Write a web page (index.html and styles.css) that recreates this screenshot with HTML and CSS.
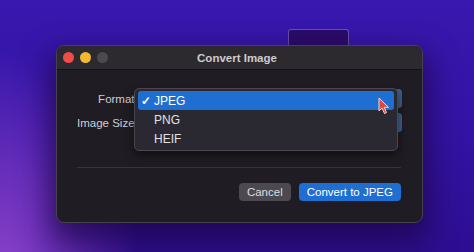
FILE: index.html
```html
<!DOCTYPE html>
<html>
<head>
<meta charset="utf-8">
	<title>Convert Image</title>

	<link rel="stylesheet" href="styles.css">
</head>
<body>

<div class="desktop">
	<div class="back-tab"></div>

	<div class="window">
		<div class="titlebar">
			<div class="lights">
				<span class="light red"></span>
				<span class="light yellow"></span>
				<span class="light grey"></span>
			</div>
			<div class="title">Convert Image</div>
		</div>

		<div class="content">
			<div class="form">
				<label class="label">Format</label>
				<div class="popup"><span class="popup-arrow"></span></div>
				<label class="label">Image Size</label>
				<div class="popup"><span class="popup-arrow"></span></div>
			</div>

			<div class="separator"></div>

			<div class="actions">
				<button class="btn">Cancel</button>
				<button class="btn primary">Convert to JPEG</button>
			</div>
		</div>

		<div class="menu">
			<div class="menu-item active"><span class="check">✓</span>JPEG</div>
			<div class="menu-item"><span class="check"></span>PNG</div>
			<div class="menu-item"><span class="check"></span>HEIF</div>
		</div>

		<svg class="cursor" width="12" height="18" viewBox="0 0 12 18">
			<path d="M1 1 L1 14 L4 11 L6.5 16.5 L8.5 15.6 L6.2 10.3 L10.5 10.3 Z" fill="#e0483c" stroke="#f4d6d2" stroke-width="1"/>
		</svg>
	</div>
</div>

</body>
</html>
```

FILE: styles.css
```css
body{
	margin: 0;
	width: 474px;
	height: 252px;
	overflow: hidden;
	font-family: "Liberation Sans", Arial, sans-serif;
	background:
		radial-gradient(ellipse 140px 230px at 0 280px, #8e44cc 0%, rgba(130,60,200,0.65) 50%, rgba(60,20,160,0) 100%),
		linear-gradient(180deg, #3818ae 0%, #3314a6 45%, #2d0e92 100%);
}
.desktop{
	position: relative;
	width: 474px;
	height: 252px;
}
.back-tab{
	position: absolute;
	left: 288px;
	top: 29px;
	width: 59px;
	height: 17px;
	background: #2a0c68;
	border: 1px solid #6a52aa;
	border-bottom: none;
	border-radius: 3px 3px 0 0;
}
.window{
	position: absolute;
	left: 56px;
	top: 45px;
	width: 365px;
	height: 176px;
	background: #1f1c23;
	border: 1px solid #45424b;
	border-radius: 8px;
	box-shadow: 0 14px 30px 6px rgba(30,6,70,0.75);
}
.titlebar{
	height: 23px;
	background: #2c2a2f;
	border-bottom: 1px solid #141216;
	border-radius: 8px 8px 0 0;
	display: flex;
	align-items: center;
}
.lights{
	display: flex;
	gap: 6px;
	padding-left: 6px;
}
.light{
	width: 11px;
	height: 11px;
	border-radius: 50%;
	display: block;
}
.light.red{
	background: #ee4e48;
}
.light.yellow{
	background: #f3b82c;
}
.light.grey{
	background: #4c4a4f;
}
.title{
	flex: 1;
	text-align: center;
	margin-right: 56px;
	color: #cdcbd0;
	font-size: 11.5px;
	font-weight: 700;
}
.content{
	padding: 19px 20px 0 20px;
}
.form{
	display: grid;
	grid-template-columns: auto 1fr;
	column-gap: 2px;
	row-gap: 5px;
	align-items: center;
}
.label{
	text-align: right;
	color: #cfcdd2;
	font-size: 11.5px;
	white-space: nowrap;
}
.popup{
	height: 19px;
	background: #45434a;
	border-radius: 4px;
	display: flex;
	justify-content: flex-end;
}
.popup-arrow{
	width: 6px;
	height: 19px;
	background: #3f5d8c;
	border-radius: 0 4px 4px 0;
	display: block;
}
.separator{
	height: 1px;
	background: #37343c;
	margin-top: 35px;
	margin-right: 1px;
}
.actions{
	display: flex;
	justify-content: flex-end;
	gap: 8px;
	margin-top: 15px;
	margin-right: 1px;
}
.btn{
	font-family: inherit;
	font-size: 11.5px;
	height: 18px;
	padding: 0 8px;
	border: none;
	border-radius: 4px;
	color: #dedce0;
	background: #4c4a50;
}
.btn.primary{
	background: #1f6fd3;
	color: #ffffff;
}
.menu{
	position: absolute;
	left: 77px;
	top: 42px;
	width: 256px;
	padding: 2px 3px;
	background: #2a2830;
	border: 1px solid #4a4750;
	border-radius: 5px;
	box-shadow: 0 4px 10px rgba(0,0,0,0.5);
}
.menu-item{
	height: 19px;
	display: flex;
	align-items: center;
	color: #e4e2e6;
	font-size: 12px;
	border-radius: 3px;
}
.menu-item.active{
	background: #1f6fd3;
	color: #ffffff;
}
.check{
	width: 16px;
	padding-left: 3px;
	box-sizing: border-box;
	font-size: 12px;
	font-weight: 700;
}
.cursor{
	position: absolute;
	left: 321px;
	top: 51px;
}
```
